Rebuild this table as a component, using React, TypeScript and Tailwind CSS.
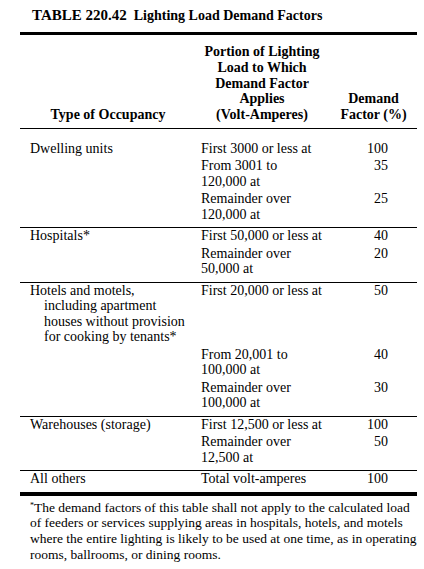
type Entry = {
  portion: string[];
  factor: string;
};

type Group = {
  occupancy: string[];
  entries: Entry[];
};

const groups: Group[] = [
  {
    occupancy: ['Dwelling units'],
    entries: [
      { portion: ['First 3000 or less at'], factor: '100' },
      { portion: ['From 3001 to', '120,000 at'], factor: '35' },
      { portion: ['Remainder over', '120,000 at'], factor: '25' },
    ],
  },
  {
    occupancy: ['Hospitals*'],
    entries: [
      { portion: ['First 50,000 or less at'], factor: '40' },
      { portion: ['Remainder over', '50,000 at'], factor: '20' },
    ],
  },
  {
    occupancy: [
      'Hotels and motels,',
      'including apartment',
      'houses without provision',
      'for cooking by tenants*',
    ],
    entries: [
      { portion: ['First 20,000 or less at'], factor: '50' },
      { portion: ['From 20,001 to', '100,000 at'], factor: '40' },
      { portion: ['Remainder over', '100,000 at'], factor: '30' },
    ],
  },
  {
    occupancy: ['Warehouses (storage)'],
    entries: [
      { portion: ['First 12,500 or less at'], factor: '100' },
      { portion: ['Remainder over', '12,500 at'], factor: '50' },
    ],
  },
  {
    occupancy: ['All others'],
    entries: [{ portion: ['Total volt-amperes'], factor: '100' }],
  },
];

const cols = 'grid grid-cols-[181px_129px_87px]';

function Lines({ lines }: { lines: string[] }) {
  return (
    <>
      {lines.map((line, i) => (
        <div key={i} className={i > 0 ? 'pl-[14px]' : ''}>
          {line}
        </div>
      ))}
    </>
  );
}

function GroupRows({ group, first }: { group: Group; first: boolean }) {
  return (
    <div
      className={[
        cols,
        'gap-y-[2px] border-b border-black pb-[5px]',
        first ? 'pt-[12px]' : 'pt-0',
      ].join(' ')}
    >
      {group.entries.map((entry, i) => (
        <div key={i} className="contents">
          <div className="pl-[10px]">{i === 0 ? <Lines lines={group.occupancy} /> : null}</div>
          <div>
            {entry.portion.map((line) => (
              <div key={line}>{line}</div>
            ))}
          </div>
          <div className="pr-[29px] text-right">{entry.factor}</div>
        </div>
      ))}
    </div>
  );
}

export default function App() {
  return (
    <div className="h-[569px] w-[424px] overflow-hidden bg-white text-black [font-family:'Liberation_Serif','Times_New_Roman',serif]">
      <div className="pl-[32px] pt-[6px] text-[14px] font-bold leading-[18px]">
        <span className="text-[15px]">TABLE 220.42</span>
        <span className="ml-[7px]">Lighting Load Demand Factors</span>
      </div>

      <div className="ml-[20px] mt-[7px] w-[397px] text-[14px] leading-[15.5px]">
        <div className="h-[3px] bg-black" />

        <div
          className={[
            cols,
            'items-end border-b border-black pb-[5px] pt-[9px] font-bold leading-[15.75px]',
          ].join(' ')}
        >
          <div className="pr-[5px] text-center">Type of Occupancy</div>
          <div className="pr-[7px] text-center">
            Portion of Lighting
            <br />
            Load to Which
            <br />
            Demand Factor
            <br />
            Applies
            <br />
            (Volt-Amperes)
          </div>
          <div className="text-center">
            Demand
            <br />
            Factor (%)
          </div>
        </div>

        {groups.map((group, i) => (
          <GroupRows key={i} group={group} first={i === 0} />
        ))}

        <div className="h-[3px] bg-black" />

        <div className="whitespace-nowrap pl-[10px] pt-[4px] text-[13.5px] leading-[15.7px]">
          <sup className="text-[8px]">*</sup>The demand factors of this table shall not apply to the calculated load
          <br />
          of feeders or services supplying areas in hospitals, hotels, and motels
          <br />
          where the entire lighting is likely to be used at one time, as in operating
          <br />
          rooms, ballrooms, or dining rooms.
        </div>
      </div>
    </div>
  );
}
